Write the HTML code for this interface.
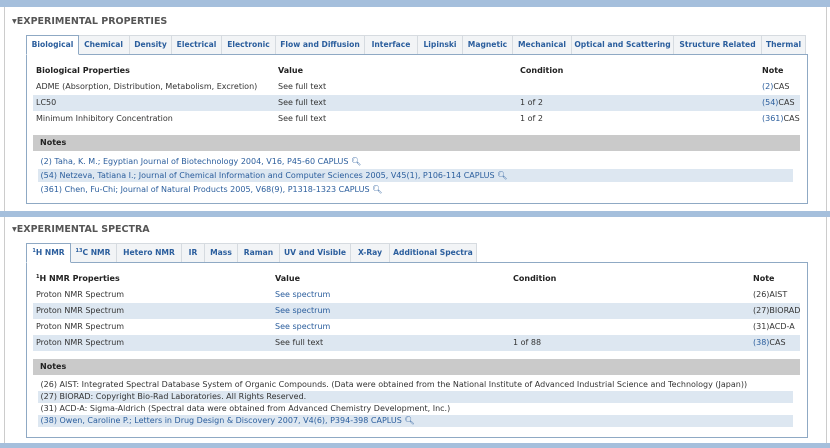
<!DOCTYPE html>
<html><head><style>
*{margin:0;padding:0;box-sizing:border-box}
body{width:830px;height:448px;background:#fff;font-family:"DejaVu Sans","Liberation Sans",sans-serif;font-size:8px;color:#333;position:relative;overflow:hidden}
.a{position:absolute;white-space:nowrap}
.bar{position:absolute;left:0;width:830px;background:#a5bfdc}
.panel{position:absolute;left:4px;width:823px;border-left:1px solid #ccc;border-right:1px solid #ccc;background:#fff}
.title{position:absolute;left:12px;font-weight:bold;font-size:9.5px;color:#555}
.tab{position:absolute;height:20px;background:#f2f4f6;border:1px solid #d6dbe0;border-left:none;color:#2b5e9d;font-weight:bold;font-size:7.6px;text-align:center;line-height:18px;white-space:nowrap;overflow:hidden}
.tab.on{background:#fff;border:1px solid #8fa9c4;border-bottom:1px solid #fff;z-index:2}
sup{font-size:5px;line-height:0;vertical-align:3px}
.box{position:absolute;border:1px solid #8fa9c4;background:#fff}
.row{position:absolute;left:33px;height:16px;line-height:16px;white-space:nowrap}
.alt{background:#dde7f1}
.b{font-weight:bold;color:#222}
.l{color:#2b5e9d}
.nh{position:absolute;left:33px;width:767px;height:16px;background:#cacaca;font-weight:bold;line-height:16px;padding-left:7px;color:#222}
</style></head><body>
<div class="bar" style="top:0;height:7px"></div>
<div class="panel" style="top:7px;height:204px"></div>
<div class="title" style="top:16px">▾EXPERIMENTAL PROPERTIES</div>
<div class="tab on" style="left:26px;top:35px;width:53px">Biological</div>
<div class="tab" style="left:78px;top:35px;width:52px">Chemical</div>
<div class="tab" style="left:130px;top:35px;width:42px">Density</div>
<div class="tab" style="left:172px;top:35px;width:50px">Electrical</div>
<div class="tab" style="left:222px;top:35px;width:54px">Electronic</div>
<div class="tab" style="left:276px;top:35px;width:89px">Flow and Diffusion</div>
<div class="tab" style="left:365px;top:35px;width:53px">Interface</div>
<div class="tab" style="left:418px;top:35px;width:45px">Lipinski</div>
<div class="tab" style="left:463px;top:35px;width:50px">Magnetic</div>
<div class="tab" style="left:513px;top:35px;width:59px">Mechanical</div>
<div class="tab" style="left:572px;top:35px;width:102px">Optical and Scattering</div>
<div class="tab" style="left:674px;top:35px;width:88px">Structure Related</div>
<div class="tab" style="left:762px;top:35px;width:44px">Thermal</div>
<div class="box" style="left:26px;top:54px;width:782px;height:150px"></div>
<div class="row b" style="top:63px;width:767px"><span class="a" style="left:3px">Biological Properties</span><span class="a" style="left:245px">Value</span><span class="a" style="left:487px">Condition</span><span class="a" style="left:729px">Note</span></div>
<div class="row" style="top:79px;width:767px"><span class="a" style="left:3px">ADME (Absorption, Distribution, Metabolism, Excretion)</span><span class="a" style="left:245px">See full text</span><span class="a" style="left:729px"><span class="l">(2)</span>CAS</span></div>
<div class="row alt" style="top:95px;width:767px"><span class="a" style="left:3px">LC50</span><span class="a" style="left:245px">See full text</span><span class="a" style="left:487px">1 of 2</span><span class="a" style="left:729px"><span class="l">(54)</span>CAS</span></div>
<div class="row" style="top:111px;width:767px"><span class="a" style="left:3px">Minimum Inhibitory Concentration</span><span class="a" style="left:245px">See full text</span><span class="a" style="left:487px">1 of 2</span><span class="a" style="left:729px"><span class="l">(361)</span>CAS</span></div>
<div class="nh" style="top:135px">Notes</div>
<div class="row l" style="top:155px;height:13px;line-height:13px;left:38px;width:755px">&nbsp;(2) Taha, K. M.; Egyptian Journal of Biotechnology 2004, V16, P45-60 CAPLUS &#x1F50D;&#xFE0E;</div>
<div class="row l alt" style="top:169px;height:13px;line-height:13px;left:38px;width:755px">&nbsp;(54) Netzeva, Tatiana I.; Journal of Chemical Information and Computer Sciences 2005, V45(1), P106-114 CAPLUS &#x1F50D;&#xFE0E;</div>
<div class="row l" style="top:183px;height:13px;line-height:13px;left:38px;width:755px">&nbsp;(361) Chen, Fu-Chi; Journal of Natural Products 2005, V68(9), P1318-1323 CAPLUS &#x1F50D;&#xFE0E;</div>

<div class="bar" style="top:211px;height:6px"></div>
<div class="panel" style="top:217px;height:226px"></div>
<div class="title" style="top:224px">▾EXPERIMENTAL SPECTRA</div>
<div class="tab on" style="left:26px;top:243px;width:45px"><sup>1</sup>H NMR</div>
<div class="tab" style="left:70px;top:243px;width:47px"><sup>13</sup>C NMR</div>
<div class="tab" style="left:117px;top:243px;width:65px">Hetero NMR</div>
<div class="tab" style="left:182px;top:243px;width:23px">IR</div>
<div class="tab" style="left:205px;top:243px;width:33px">Mass</div>
<div class="tab" style="left:238px;top:243px;width:42px">Raman</div>
<div class="tab" style="left:280px;top:243px;width:71px">UV and Visible</div>
<div class="tab" style="left:351px;top:243px;width:39px">X-Ray</div>
<div class="tab" style="left:390px;top:243px;width:87px">Additional Spectra</div>
<div class="box" style="left:26px;top:262px;width:782px;height:176px"></div>
<div class="row b" style="top:271px;width:767px"><span class="a" style="left:3px"><sup>1</sup>H NMR Properties</span><span class="a" style="left:242px">Value</span><span class="a" style="left:480px">Condition</span><span class="a" style="left:720px">Note</span></div>
<div class="row" style="top:287px;width:767px"><span class="a" style="left:3px">Proton NMR Spectrum</span><span class="a l" style="left:242px">See spectrum</span><span class="a" style="left:720px">(26)AIST</span></div>
<div class="row alt" style="top:303px;width:767px"><span class="a" style="left:3px">Proton NMR Spectrum</span><span class="a l" style="left:242px">See spectrum</span><span class="a" style="left:720px">(27)BIORAD</span></div>
<div class="row" style="top:319px;width:767px"><span class="a" style="left:3px">Proton NMR Spectrum</span><span class="a l" style="left:242px">See spectrum</span><span class="a" style="left:720px">(31)ACD-A</span></div>
<div class="row alt" style="top:335px;width:767px"><span class="a" style="left:3px">Proton NMR Spectrum</span><span class="a" style="left:242px">See full text</span><span class="a" style="left:480px">1 of 88</span><span class="a" style="left:720px"><span class="l">(38)</span>CAS</span></div>
<div class="nh" style="top:359px">Notes</div>
<div class="row" style="top:379px;height:12px;line-height:12px;left:38px;width:755px">&nbsp;(26) AIST: Integrated Spectral Database System of Organic Compounds. (Data were obtained from the National Institute of Advanced Industrial Science and Technology (Japan))</div>
<div class="row alt" style="top:391px;height:12px;line-height:12px;left:38px;width:755px">&nbsp;(27) BIORAD: Copyright Bio-Rad Laboratories. All Rights Reserved.</div>
<div class="row" style="top:403px;height:12px;line-height:12px;left:38px;width:755px">&nbsp;(31) ACD-A: Sigma-Aldrich (Spectral data were obtained from Advanced Chemistry Development, Inc.)</div>
<div class="row l alt" style="top:415px;height:12px;line-height:12px;left:38px;width:755px">&nbsp;(38) Owen, Caroline P.; Letters in Drug Design &amp; Discovery 2007, V4(6), P394-398 CAPLUS &#x1F50D;&#xFE0E;</div>
<div class="bar" style="top:443px;height:5px"></div>
</body></html>
